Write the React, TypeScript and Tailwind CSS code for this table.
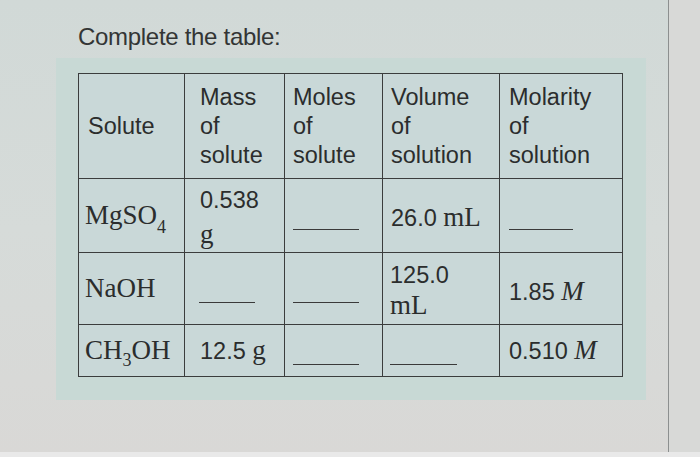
import React from "react";

const sans = { fontFamily: '"Liberation Sans", Arial, sans-serif' } as React.CSSProperties;

function Blank({ w = 66 }: { w?: number }) {
  return <span className="inline-block h-[26px] border-b-[1.5px] border-[#3a3a3a] align-middle" style={{ width: w }} />;
}

function Serif({ children, italic }: { children: React.ReactNode; italic?: boolean }) {
  return (
    <span className={`font-['Liberation_Serif',serif] text-[27px] ${italic ? "italic" : ""}`}>{children}</span>
  );
}

export default function App() {
  const cell = "border border-[#3b3d3d] align-middle";
  return (
    <div className="relative w-[700px] h-[457px] overflow-hidden bg-[#d8d9d7] text-[#2b2d2d] font-['Liberation_Sans',Arial,sans-serif]">
      <div className="absolute left-0 top-0 w-[668px] h-[457px] bg-gradient-to-b from-[#d1d9d7] via-[#d6dbd9] to-[#d9d8d6]" />
      <div className="absolute left-[56px] top-[58px] w-[590px] h-[342px] bg-[#c8d9d5]" />
      <div className="absolute left-[668px] top-0 w-px h-[457px] bg-[#8c8f8f]" />
      <div className="absolute left-0 bottom-0 w-[700px] h-[5px] bg-[#e9e9e9]" />

      <div className="relative pl-[78px] pt-[21px]">
        <div className="text-[24px] leading-[31px] text-[#333535] tracking-[-0.3px]">Complete the table:</div>
        <table className="mt-[21px] border-collapse table-fixed bg-[#c9d8d8] text-[23.5px]" style={sans}>
          <colgroup>
            <col className="w-[106px]" />
            <col className="w-[100px]" />
            <col className="w-[98px]" />
            <col className="w-[117px]" />
            <col className="w-[123px]" />
          </colgroup>
          <tbody>
            <tr className="h-[105px] leading-[29px]">
              <td className={`${cell} pl-[9px]`}>Solute</td>
              <td className={`${cell} pl-[15px]`}>Mass<br />of<br />solute</td>
              <td className={`${cell} pl-[8px]`}>Moles<br />of<br />solute</td>
              <td className={`${cell} pl-[8px]`}>Volume<br />of<br />solution</td>
              <td className={`${cell} pl-[9px]`}>Molarity<br />of<br />solution</td>
            </tr>
            <tr className="h-[73px]">
              <td className={`${cell} pl-[6px] leading-[30px]`}>
                <Serif>MgSO<sub className="text-[18px] align-[-4px]">4</sub></Serif>
              </td>
              <td className={`${cell} pl-[15px] leading-[34px] pt-[4px]`}>0.538<br /><Serif>g</Serif></td>
              <td className={`${cell} pl-[8px]`}><Blank /></td>
              <td className={`${cell} pl-[8px] pt-[4px] leading-[30px]`}>26.0 <Serif>mL</Serif></td>
              <td className={`${cell} pl-[9px]`}><Blank w={64} /></td>
            </tr>
            <tr className="h-[72px]">
              <td className={`${cell} pl-[6px] leading-[30px]`}><Serif>NaOH</Serif></td>
              <td className={`${cell} pl-[14px]`}><Blank w={56} /></td>
              <td className={`${cell} pl-[8px]`}><Blank /></td>
              <td className={`${cell} pl-[7px] leading-[30px] pt-[4px]`}>125.0<br /><Serif>mL</Serif></td>
              <td className={`${cell} pl-[9px] pt-[6px] leading-[30px]`}>1.85 <Serif italic>M</Serif></td>
            </tr>
            <tr className="h-[52px]">
              <td className={`${cell} pl-[6px] leading-[30px]`}>
                <Serif>CH<sub className="text-[18px] align-[-2px]">3</sub>OH</Serif>
              </td>
              <td className={`${cell} pl-[15px] leading-[30px]`}>12.5 <Serif>g</Serif></td>
              <td className={`${cell} pl-[8px]`}><Blank /></td>
              <td className={`${cell} pl-[7px]`}><Blank w={67} /></td>
              <td className={`${cell} pl-[9px] leading-[30px]`}>0.510 <Serif italic>M</Serif></td>
            </tr>
          </tbody>
        </table>
      </div>
    </div>
  );
}
